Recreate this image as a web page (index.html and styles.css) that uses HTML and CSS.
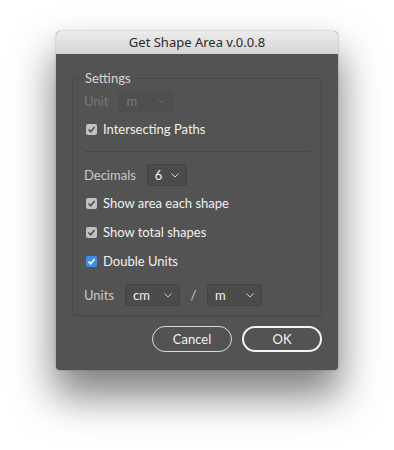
FILE: index.html
```html
<!DOCTYPE html>
<html>
<head>
<meta charset="utf-8">
<link rel="stylesheet" href="styles.css">
</head>
<body>
<div class="stage">
<div class="window">
  <div class="titlebar">Get Shape Area v.0.0.8</div>
  <div class="content">
    <div class="panel">
      <span class="legend">Settings</span>
      <div class="row r-unit">
        <span class="label disabled">Unit</span>
        <div class="select disabled-select sel-unit"><span>m</span><svg class="chev" width="8" height="5" viewBox="0 0 8 5"><path d="M0.5 0.5 L4 4 L7.5 0.5" fill="none" stroke="currentColor" stroke-width="1"/></svg></div>
      </div>
      <div class="row r-check1">
        <span class="cb gray"><svg width="11" height="11" viewBox="0 0 11 11"><path d="M2.5 5.5 L4.6 7.7 L8.6 3" fill="none" stroke="#4e4e4e" stroke-width="1.6"/></svg></span>
        <span class="cbtext">Intersecting Paths</span>
      </div>
      <div class="sep"></div>
      <div class="row r-dec">
        <span class="label">Decimals</span>
        <div class="select sel-dec"><span>6</span><svg class="chev" width="8" height="5" viewBox="0 0 8 5"><path d="M0.5 0.5 L4 4 L7.5 0.5" fill="none" stroke="currentColor" stroke-width="1"/></svg></div>
      </div>
      <div class="row r-c2">
        <span class="cb gray"><svg width="11" height="11" viewBox="0 0 11 11"><path d="M2.5 5.5 L4.6 7.7 L8.6 3" fill="none" stroke="#4e4e4e" stroke-width="1.6"/></svg></span>
        <span class="cbtext">Show area each shape</span>
      </div>
      <div class="row r-c3">
        <span class="cb gray"><svg width="11" height="11" viewBox="0 0 11 11"><path d="M2.5 5.5 L4.6 7.7 L8.6 3" fill="none" stroke="#4e4e4e" stroke-width="1.6"/></svg></span>
        <span class="cbtext">Show total shapes</span>
      </div>
      <div class="row r-c4">
        <span class="cb blue"><svg width="11" height="11" viewBox="0 0 11 11"><path d="M2.5 5.5 L4.6 7.7 L8.6 3" fill="none" stroke="#ffffff" stroke-width="1.6"/></svg></span>
        <span class="cbtext">Double Units</span>
      </div>
      <div class="row r-units">
        <span class="label">Units</span>
        <div class="select sel-cm"><span>cm</span><svg class="chev" width="8" height="5" viewBox="0 0 8 5"><path d="M0.5 0.5 L4 4 L7.5 0.5" fill="none" stroke="currentColor" stroke-width="1"/></svg></div>
        <span class="slash">/</span>
        <div class="select sel-m"><span>m</span><svg class="chev" width="8" height="5" viewBox="0 0 8 5"><path d="M0.5 0.5 L4 4 L7.5 0.5" fill="none" stroke="currentColor" stroke-width="1"/></svg></div>
      </div>
    </div>
    <div class="buttons">
      <div class="btn cancel">Cancel</div>
      <div class="btn ok">OK</div>
    </div>
  </div>
</div>
</div>
</body>
</html>
```
FILE: styles.css
```css
html, body {
  margin: 0;
  padding: 0;
  background: #ffffff;
}
body {
  font-family: Lato, "Open Sans", sans-serif;
}
.stage {
  width: 394px;
  height: 450px;
  padding: 31px 0 0 56px;
  box-sizing: border-box;
  background: #ffffff;
}
.window {
  width: 282px;
  height: 339px;
  border-radius: 5px 5px 4px 4px;
  background: #535353;
  box-shadow: 0 24px 40px 2px rgba(0,0,0,0.5), 0 0 2px rgba(0,0,0,0.3);
  overflow: hidden;
}
.titlebar {
  height: 23px;
  line-height: 23px;
  text-align: center;
  font-size: 13px;
  color: #2a2a2a;
  background: linear-gradient(#ececec, #d5d5d5);
  font-family: "Noto Sans", Lato, sans-serif;
}
.content {
  padding: 24px 16px 0 16px;
}
.panel {
  position: relative;
  border: 1px solid #494949;
  border-radius: 2px;
  padding: 11px 11px 9px 11px;
  display: flex;
  flex-direction: column;
}
.legend {
  position: absolute;
  top: -9px;
  left: 8px;
  padding: 0 4px;
  background: #535353;
  color: #d6d6d6;
  font-size: 13px;
  line-height: 16px;
}
.row {
  height: 22px;
  display: flex;
  align-items: center;
  font-size: 13px;
}
.r-check1 { margin-top: 6px; }
.sep {
  height: 1px;
  background: #474747;
  margin: 11px 0 0 0;
}
.r-dec { margin-top: 12px; }
.r-c2 { margin-top: 6px; }
.r-c3 { margin-top: 7px; }
.r-c4 { margin-top: 7px; }
.r-units { margin-top: 12px; }
.label {
  color: #c9c9c9;
}
.label.disabled {
  color: #777777;
}
.select {
  height: 22px;
  box-sizing: border-box;
  border: 1px solid #444444;
  border-radius: 3px;
  background: #4b4b4b;
  display: flex;
  align-items: center;
  justify-content: space-between;
  padding: 0 7px 0 7px;
  color: #f2f2f2;
  font-size: 13px;
}
.select .chev {
  color: #d0d0d0;
}
.disabled-select {
  border-color: #4f4f4f;
  background: #4f4f4f;
  color: #777777;
}
.disabled-select .chev { color: #6a6a6a; }
.sel-unit { width: 56px; margin-left: 10px; }
.sel-dec { width: 40px; margin-left: 11px; }
.sel-cm { width: 55px; margin-left: 11px; }
.sel-m { width: 55px; }
.slash {
  color: #c9c9c9;
  width: 27px;
  text-align: center;
}
.cb {
  width: 11px;
  height: 11px;
  border-radius: 2px;
  margin-left: 2px;
  margin-right: 6px;
  display: flex;
}
.cb.gray { background: #c2c2c2; }
.cb.blue { background: #3f8ee4; }
.cbtext {
  color: #f0f0f0;
}
.buttons {
  display: flex;
  justify-content: flex-end;
  gap: 10px;
  margin-top: 10px;
}
.btn {
  width: 80px;
  height: 26px;
  box-sizing: border-box;
  border-radius: 13px;
  display: flex;
  align-items: center;
  justify-content: center;
  color: #f2f2f2;
  font-size: 13px;
}
.cancel { border: 1.5px solid #dcdcdc; }
.ok { border: 2px solid #f4f4f4; }
```
